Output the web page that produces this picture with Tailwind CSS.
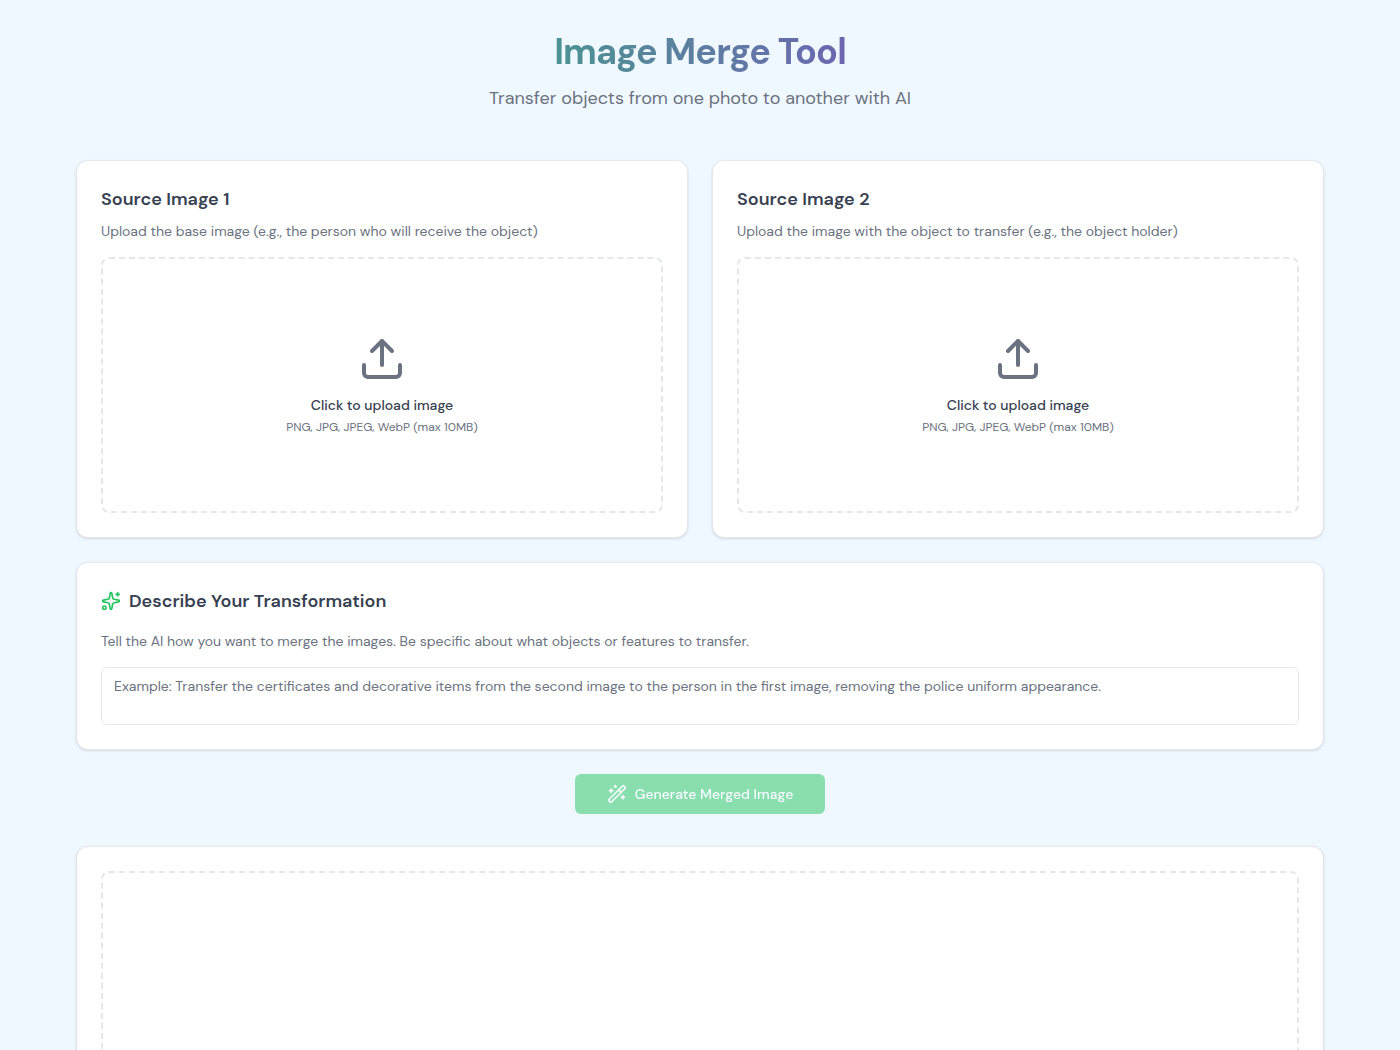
<!DOCTYPE html>
<html lang="en">
<head>
  <meta charset="UTF-8">
  <meta name="viewport" content="width=device-width, initial-scale=1.0">
  <title>Image Merge Tool</title>
  <script src="https://cdn.jsdelivr.net/npm/@tailwindcss/browser@4"></script>
</head>
<body class="min-h-screen bg-[#f0f8ff] font-['DM_Sans','Inter',sans-serif] text-[#374151]">

  <main class="max-w-7xl mx-auto px-4 py-8">

    <!-- Header -->
    <header class="text-center mb-12">
      <h1 class="w-fit mx-auto text-4xl font-bold tracking-tight mb-3 bg-gradient-to-r from-[#4a9290] to-[#6b66b0] bg-clip-text text-transparent">Image Merge Tool</h1>
      <p class="text-lg text-[#6b7280]">Transfer objects from one photo to another with AI</p>
    </header>

    <!-- Source images -->
    <div class="grid md:grid-cols-2 gap-6 mb-6">
      <section class="bg-white border border-[#e5e7eb] rounded-xl shadow-sm p-6">
        <h2 class="text-lg font-semibold mb-2">Source Image 1</h2>
        <p class="text-sm text-[#6b7280] mb-4">Upload the base image (e.g., the person who will receive the object)</p>
        <label for="image1" class="flex flex-col items-center justify-center h-64 border-2 border-dashed border-[#e5e7eb] rounded-lg cursor-pointer">
          <svg class="size-12 mb-3 text-[#6b7280]" viewBox="0 0 24 24" fill="none" stroke="currentColor" stroke-width="2" stroke-linecap="round" stroke-linejoin="round">
            <path d="M12 3v12"/>
            <path d="m17 8-5-5-5 5"/>
            <path d="M21 15v4a2 2 0 0 1-2 2H5a2 2 0 0 1-2-2v-4"/>
          </svg>
          <span class="text-sm font-medium mb-1">Click to upload image</span>
          <span class="text-xs text-[#6b7280]">PNG, JPG, JPEG, WebP (max 10MB)</span>
          <input id="image1" type="file" accept="image/*" class="sr-only">
        </label>
      </section>

      <section class="bg-white border border-[#e5e7eb] rounded-xl shadow-sm p-6">
        <h2 class="text-lg font-semibold mb-2">Source Image 2</h2>
        <p class="text-sm text-[#6b7280] mb-4">Upload the image with the object to transfer (e.g., the object holder)</p>
        <label for="image2" class="flex flex-col items-center justify-center h-64 border-2 border-dashed border-[#e5e7eb] rounded-lg cursor-pointer">
          <svg class="size-12 mb-3 text-[#6b7280]" viewBox="0 0 24 24" fill="none" stroke="currentColor" stroke-width="2" stroke-linecap="round" stroke-linejoin="round">
            <path d="M12 3v12"/>
            <path d="m17 8-5-5-5 5"/>
            <path d="M21 15v4a2 2 0 0 1-2 2H5a2 2 0 0 1-2-2v-4"/>
          </svg>
          <span class="text-sm font-medium mb-1">Click to upload image</span>
          <span class="text-xs text-[#6b7280]">PNG, JPG, JPEG, WebP (max 10MB)</span>
          <input id="image2" type="file" accept="image/*" class="sr-only">
        </label>
      </section>
    </div>

    <!-- Prompt -->
    <section class="bg-white border border-[#e5e7eb] rounded-xl shadow-sm p-6 mb-6">
      <div class="flex items-center gap-2 mb-4">
        <svg class="size-5 text-[#22c55e]" viewBox="0 0 24 24" fill="none" stroke="currentColor" stroke-width="2" stroke-linecap="round" stroke-linejoin="round">
          <path d="M11.017 2.814a1 1 0 0 1 1.966 0l1.051 5.558a2 2 0 0 0 1.594 1.594l5.558 1.051a1 1 0 0 1 0 1.966l-5.558 1.051a2 2 0 0 0-1.594 1.594l-1.051 5.558a1 1 0 0 1-1.966 0l-1.051-5.558a2 2 0 0 0-1.594-1.594l-5.558-1.051a1 1 0 0 1 0-1.966l5.558-1.051a2 2 0 0 0 1.594-1.594z"/>
          <path d="M20 2v4"/>
          <path d="M22 4h-4"/>
          <circle cx="4" cy="20" r="2"/>
        </svg>
        <h2 class="text-lg font-semibold">Describe Your Transformation</h2>
      </div>
      <label for="prompt" class="block text-sm text-[#6b7280] mb-4">Tell the AI how you want to merge the images. Be specific about what objects or features to transfer.</label>
      <textarea id="prompt" rows="2" placeholder="Example: Transfer the certificates and decorative items from the second image to the person in the first image, removing the police uniform appearance." class="block w-full px-3 py-2 text-sm border border-[#e5e7eb] rounded-md resize-none placeholder:text-[#6b7280]"></textarea>
    </section>

    <!-- Generate -->
    <div class="flex justify-center mb-8">
      <button id="generateBtn" disabled class="flex items-center justify-center gap-2 h-10 px-8 rounded-md bg-[#22c55e] text-white text-sm font-medium opacity-50">
        <svg class="size-5" viewBox="0 0 24 24" fill="none" stroke="currentColor" stroke-width="2" stroke-linecap="round" stroke-linejoin="round">
          <path d="m21.64 3.64-1.28-1.28a1.21 1.21 0 0 0-1.72 0L2.36 18.64a1.21 1.21 0 0 0 0 1.72l1.28 1.28a1.2 1.2 0 0 0 1.72 0L21.64 5.36a1.2 1.2 0 0 0 0-1.72"/>
          <path d="m14 7 3 3"/>
          <path d="M5 6v4"/>
          <path d="M19 14v4"/>
          <path d="M10 2v2"/>
          <path d="M7 8H3"/>
          <path d="M21 16h-4"/>
          <path d="M11 3H9"/>
        </svg>
        Generate Merged Image
      </button>
    </div>

    <!-- Result -->
    <section class="bg-white border border-[#e5e7eb] rounded-xl shadow-sm p-6">
      <div id="result" class="h-96 border-2 border-dashed border-[#e5e7eb] rounded-lg"></div>
    </section>

  </main>

</body>
</html>
